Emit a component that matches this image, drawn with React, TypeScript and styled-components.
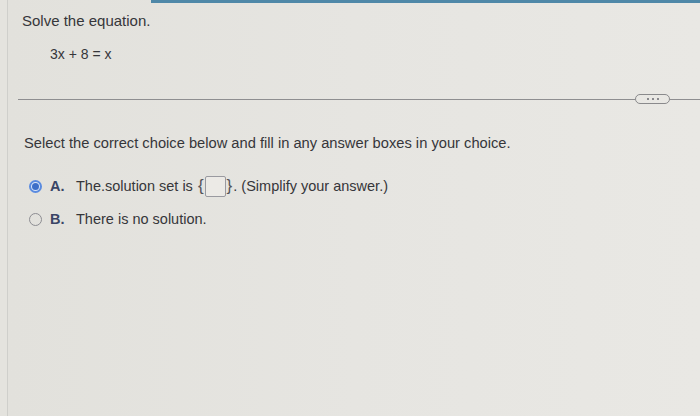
import React from "react";
import styled, { createGlobalStyle } from "styled-components";

const Global = createGlobalStyle`
  html, body { margin: 0; padding: 0; }
  body {
    width: 700px; height: 416px; overflow: hidden;
    background: #e4e3de;
    font-family: "Liberation Sans", Arial, sans-serif;
    color: #36363a;
  }
`;

const Page = styled.div`
  position: relative;
  height: 416px;
  background: linear-gradient(90deg, #e2e1dc 0%, #e6e5e1 50%, #e9e8e4 100%);
  box-sizing: border-box;
  border-left: 1px solid #cfcfcb;
  margin-left: 7px;
  width: 693px;
`;

const TopBar = styled.div`
  height: 3px;
  margin-left: 143px;
  background: #4f88a8;
`;

const Content = styled.div`
  padding: 9px 0 0 14px;
`;

const Title = styled.div`
  font-size: 15px;
  line-height: 18px;
`;

const Equation = styled.div`
  font-size: 14px;
  margin: 16px 0 0 28px;
  line-height: 16px;
`;

const DividerRow = styled.div`
  display: flex;
  align-items: center;
  margin: 32px 0 0 -4px;
  height: 10px;
`;

const Line = styled.div<{ $grow?: boolean }>`
  height: 1px;
  background: #8e8e90;
  flex: ${(p) => (p.$grow ? 1 : "0 0 30px")};
`;

const Pill = styled.div`
  width: 33px;
  height: 8px;
  border: 1px solid #8a8a8c;
  border-radius: 5px;
  display: flex;
  align-items: center;
  justify-content: center;
  gap: 3px;
`;

const Dot = styled.span`
  width: 2px;
  height: 2px;
  border-radius: 50%;
  background: #6a6a70;
`;

const Prompt = styled.div`
  font-size: 14.7px;
  line-height: 18px;
  margin: 30px 0 0 2px;
`;

const Choices = styled.div`
  display: flex;
  flex-direction: column;
  gap: 11px;
  margin: 23px 0 0 7px;
`;

const Choice = styled.div`
  display: flex;
  align-items: center;
  font-size: 14.5px;
  line-height: 22px;
`;

const Radio = styled.span<{ $on?: boolean }>`
  width: 13px;
  height: 13px;
  border-radius: 50%;
  box-sizing: border-box;
  border: ${(p) => (p.$on ? "2px solid #5a8be0" : "1.5px solid #8d8d92")};
  background: ${(p) => (p.$on ? "#dbe6f7" : "transparent")};
  display: flex;
  align-items: center;
  justify-content: center;
  &::after {
    content: "";
    display: ${(p) => (p.$on ? "block" : "none")};
    width: 7px;
    height: 7px;
    border-radius: 50%;
    background: #3d6fc8;
  }
`;

const Letter = styled.span`
  font-weight: bold;
  color: #3a4566;
  width: 26px;
  margin-left: 8px;
`;

const Text = styled.span`
  white-space: pre;
`;

const Brace = styled.span`
  font-size: 17px;
  color: #55555a;
  margin: 0 1px;
`;

const AnswerBox = styled.span`
  display: inline-block;
  width: 19px;
  height: 19px;
  border: 1px solid #9a9aa0;
  border-radius: 2px;
  background: #eceae6;
`;

export default function App() {
  return (
    <>
      <Global />
      <Page>
        <TopBar />
        <Content>
          <Title>Solve the equation.</Title>
          <Equation>3x + 8 = x</Equation>
          <DividerRow>
            <Line $grow />
            <Pill>
              <Dot />
              <Dot />
              <Dot />
            </Pill>
            <Line />
          </DividerRow>
          <Prompt>Select the correct choice below and fill in any answer boxes in your choice.</Prompt>
          <Choices>
            <Choice>
              <Radio $on />
              <Letter>A.</Letter>
              <Text>The.solution set is </Text>
              <Brace>{"{"}</Brace>
              <AnswerBox />
              <Brace>{"}"}</Brace>
              <Text>. (Simplify your answer.)</Text>
            </Choice>
            <Choice>
              <Radio />
              <Letter>B.</Letter>
              <Text>There is no solution.</Text>
            </Choice>
          </Choices>
        </Content>
      </Page>
    </>
  );
}
